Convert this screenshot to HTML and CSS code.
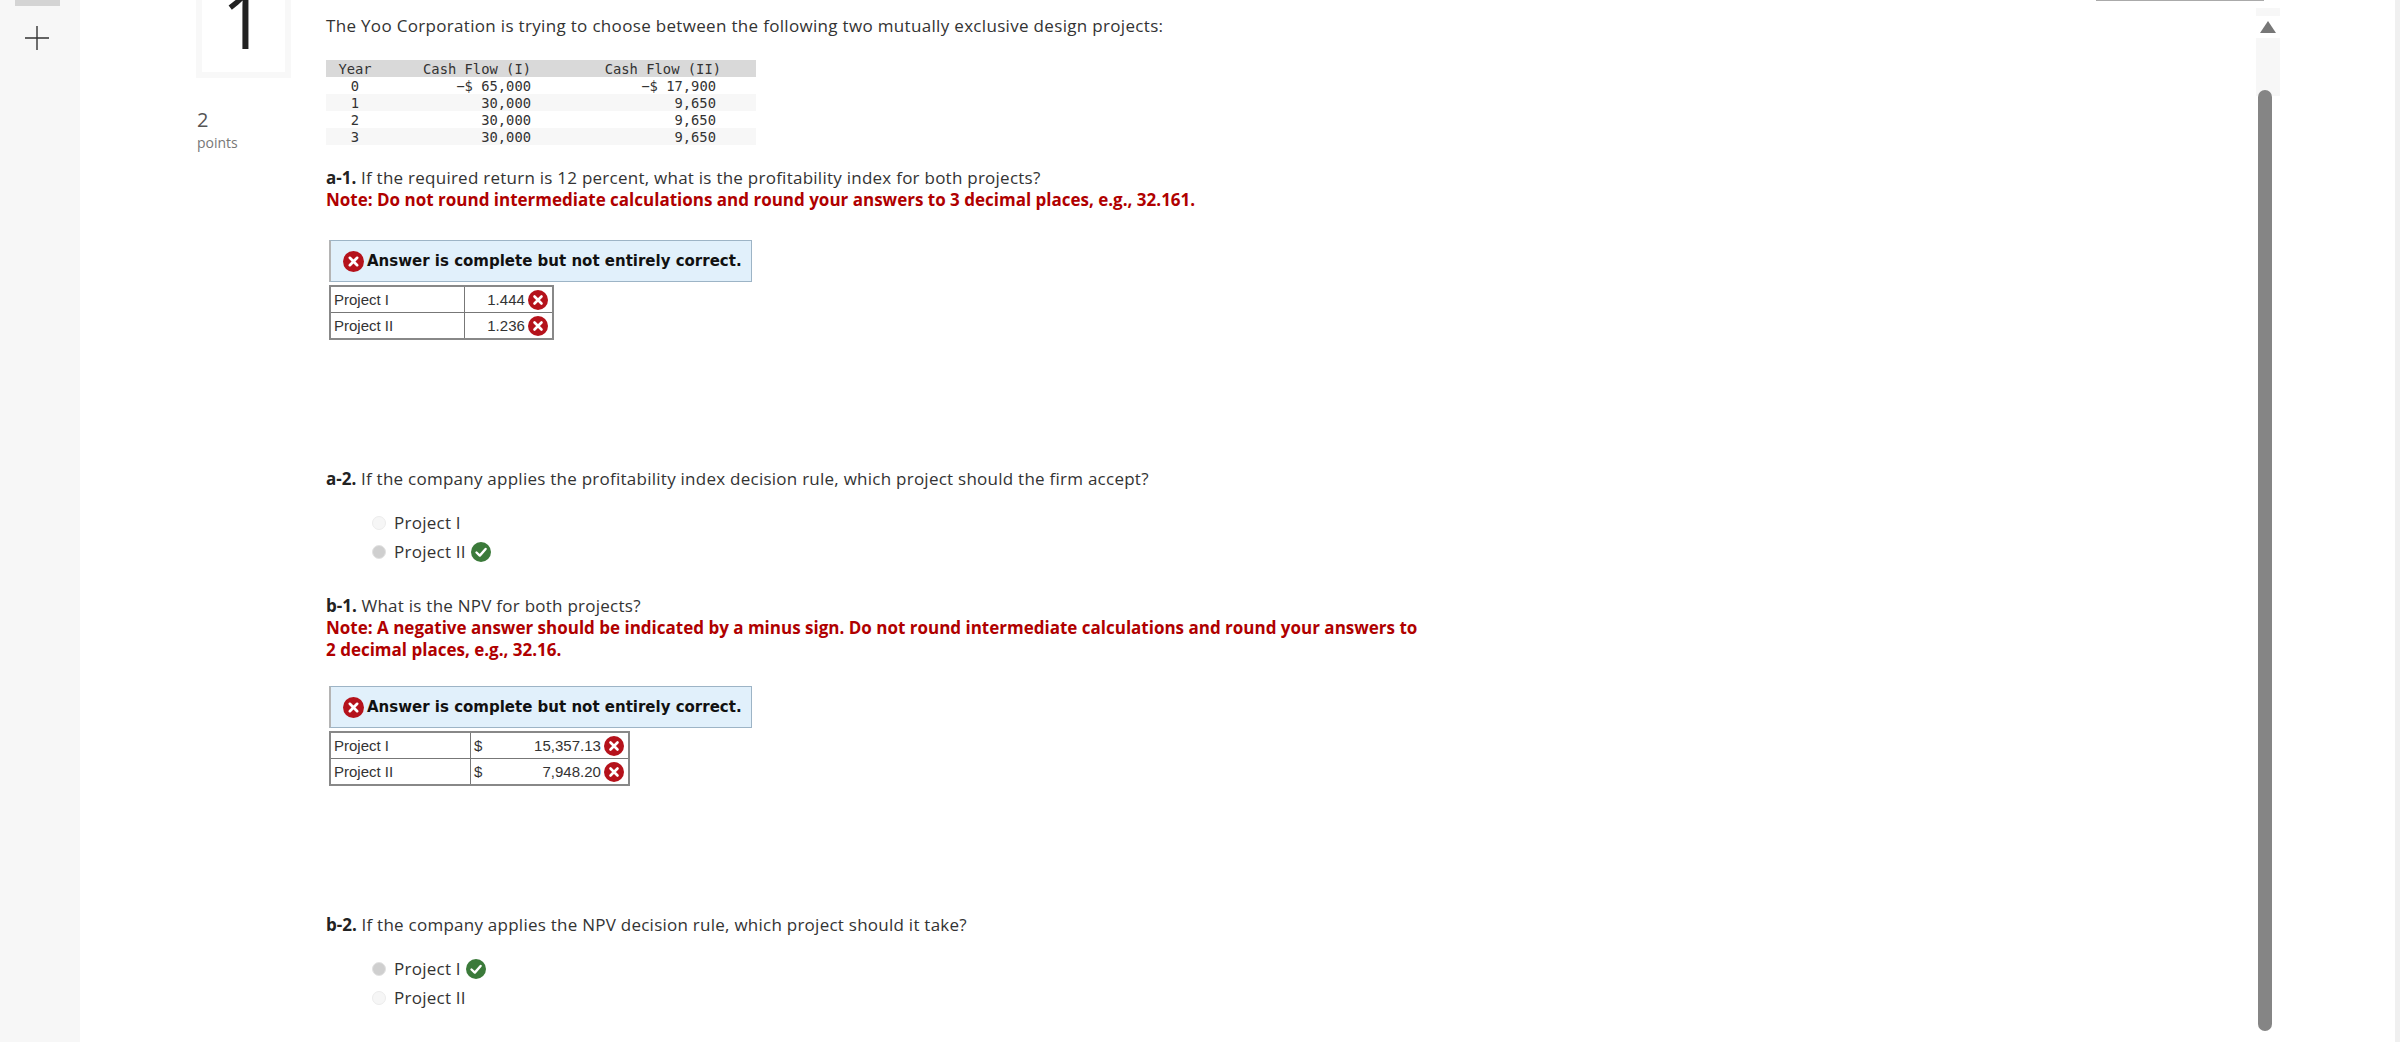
FILE: index.html
```html
<!DOCTYPE html>
<html lang="en">
<head>
    <meta charset="UTF-8">
    <title>Question 1</title>
    <link rel="stylesheet" href="styles.css">
</head>
<body>
    <div class="page">
        <div class="rail">
            <div class="rail-tab"></div>
            <svg class="rail-plus" width="24" height="24" viewBox="0 0 24 24"><path d="M12 0V24M0 12H24" stroke="#333" stroke-width="1.4" fill="none"/></svg>
        </div>
        <div class="gutter">
            <div class="number-card"><span>1</span></div>
            <div class="points-value">2</div>
            <div class="points-label">points</div>
        </div>
        <div class="content">
            <p class="intro">The Yoo Corporation is trying to choose between the following two mutually exclusive design projects:</p>

            <table class="cash-table">
                <tr><th class="year">Year</th><th class="flow1">Cash Flow (I)</th><th class="flow2">Cash Flow (II)</th></tr>
                <tr><td class="year">0</td><td class="flow1">−$ 65,000</td><td class="flow2">−$ 17,900</td></tr>
                <tr><td class="year">1</td><td class="flow1">30,000</td><td class="flow2">9,650</td></tr>
                <tr><td class="year">2</td><td class="flow1">30,000</td><td class="flow2">9,650</td></tr>
                <tr><td class="year">3</td><td class="flow1">30,000</td><td class="flow2">9,650</td></tr>
            </table>

            <p class="question q-a1"><strong>a-1.</strong> If the required return is 12 percent, what is the profitability index for both projects?<br>
                <span class="note">Note: Do not round intermediate calculations and round your answers to 3 decimal places, e.g., 32.161.</span></p>

            <div class="alert">
                <svg class="icon" viewBox="0 0 20 20"><circle cx="10" cy="10" r="10" fill="#b5121b"/><path d="M6.5 6.5L13.5 13.5M13.5 6.5L6.5 13.5" stroke="#fff" stroke-width="2.6" stroke-linecap="round"/></svg>
                <span>Answer is complete but not entirely correct.</span>
            </div>
            <table class="answers answers-pi">
                <tr><td class="name">Project I</td><td class="value">1.444 <svg class="icon" viewBox="0 0 20 20"><circle cx="10" cy="10" r="10" fill="#b5121b"/><path d="M6.5 6.5L13.5 13.5M13.5 6.5L6.5 13.5" stroke="#fff" stroke-width="2.6" stroke-linecap="round"/></svg></td></tr>
                <tr><td class="name">Project II</td><td class="value">1.236 <svg class="icon" viewBox="0 0 20 20"><circle cx="10" cy="10" r="10" fill="#b5121b"/><path d="M6.5 6.5L13.5 13.5M13.5 6.5L6.5 13.5" stroke="#fff" stroke-width="2.6" stroke-linecap="round"/></svg></td></tr>
            </table>

            <p class="question q-a2"><strong>a-2.</strong> If the company applies the profitability index decision rule, which project should the firm accept?</p>
            <div class="choices">
                <div class="choice"><span class="radio"></span>Project I</div>
                <div class="choice"><span class="radio checked"></span>Project II <svg class="icon" viewBox="0 0 20 20"><circle cx="10" cy="10" r="10" fill="#3b7a3a"/><path d="M5.5 10.5L8.8 13.6L14.6 7" stroke="#fff" stroke-width="2.4" fill="none" stroke-linecap="round" stroke-linejoin="round"/></svg></div>
            </div>

            <p class="question q-b1"><strong>b-1.</strong> What is the NPV for both projects?<br>
                <span class="note">Note: A negative answer should be indicated by a minus sign. Do not round intermediate calculations and round your answers to<br>2 decimal places, e.g., 32.16.</span></p>

            <div class="alert alert-npv">
                <svg class="icon" viewBox="0 0 20 20"><circle cx="10" cy="10" r="10" fill="#b5121b"/><path d="M6.5 6.5L13.5 13.5M13.5 6.5L6.5 13.5" stroke="#fff" stroke-width="2.6" stroke-linecap="round"/></svg>
                <span>Answer is complete but not entirely correct.</span>
            </div>
            <table class="answers answers-npv">
                <tr><td class="name">Project I</td><td class="dollar">$</td><td class="value">15,357.13 <svg class="icon" viewBox="0 0 20 20"><circle cx="10" cy="10" r="10" fill="#b5121b"/><path d="M6.5 6.5L13.5 13.5M13.5 6.5L6.5 13.5" stroke="#fff" stroke-width="2.6" stroke-linecap="round"/></svg></td></tr>
                <tr><td class="name">Project II</td><td class="dollar">$</td><td class="value">7,948.20 <svg class="icon" viewBox="0 0 20 20"><circle cx="10" cy="10" r="10" fill="#b5121b"/><path d="M6.5 6.5L13.5 13.5M13.5 6.5L6.5 13.5" stroke="#fff" stroke-width="2.6" stroke-linecap="round"/></svg></td></tr>
            </table>

            <p class="question q-b2"><strong>b-2.</strong> If the company applies the NPV decision rule, which project should it take?</p>
            <div class="choices">
                <div class="choice"><span class="radio checked"></span>Project I <svg class="icon" viewBox="0 0 20 20"><circle cx="10" cy="10" r="10" fill="#3b7a3a"/><path d="M5.5 10.5L8.8 13.6L14.6 7" stroke="#fff" stroke-width="2.4" fill="none" stroke-linecap="round" stroke-linejoin="round"/></svg></div>
                <div class="choice"><span class="radio"></span>Project II</div>
            </div>
        </div>
        <div class="scrollbar">
            <div class="scroll-head"><div class="scroll-button"><span class="scroll-arrow"></span></div></div>
            <div class="scroll-thumb"></div>
        </div>
        <div class="side"></div>
        <div class="top-line"></div>
    </div>
</body>
</html>
```

FILE: styles.css
```css
body { margin: 0; background: #fff; font-family: "Open Sans", sans-serif; color: #333; }
.page { display: flex; height: 1042px; overflow: hidden; position: relative; }

.rail { width: 80px; flex: none; background: #f7f7f7; }
.rail-tab { width: 45px; height: 6px; margin-left: 15px; background: #d4d4d4; }
.rail-plus { display: block; margin: 20px 0 0 25px; }

.gutter { width: 246px; flex: none; box-sizing: border-box; padding-left: 116px; }
.number-card {
    width: 95px;
    height: 78px;
    box-sizing: border-box;
    border: 6px solid #f8f8f8;
    border-top: none;
    overflow: hidden;
    text-align: center;
}
.number-card span {
    display: block;
    margin-top: -25px;
    font-size: 76px;
    line-height: 90px;
    color: #222;
}
.points-value { margin-top: 30px; padding-left: 1px; font-size: 20px; line-height: 24px; color: #555; }
.points-label { margin-top: 2px; padding-left: 1px; font-size: 14px; line-height: 18px; color: #777; }

.content { width: 1930px; flex: none; font-size: 17px; letter-spacing: 0.25px; }
.intro { margin: 14px 0 0; line-height: 24px; letter-spacing: 0.32px; }

.cash-table {
    border-collapse: collapse;
    margin-top: 22px;
    width: 430px;
    font-family: "DejaVu Sans Mono", monospace;
    font-size: 13.8px;
    letter-spacing: 0;
    color: #333;
    background: #fff;
}
.cash-table th { background: #d9d9d9; font-weight: normal; height: 17px; padding: 0; }
.cash-table td { height: 17px; padding: 0; }
.cash-table tr:nth-child(odd) td { background: #f7f7f7; }
.year { width: 58px; text-align: center; }
.flow1 { width: 147px; text-align: right; }
.flow2 { text-align: right; padding-right: 40px !important; }
.cash-table th.flow2 { padding-right: 35px !important; }

.question { margin: 0; line-height: 22px; }
.question strong { font-weight: 700; color: #222; letter-spacing: 0; }
.note { color: #b00000; font-weight: 700; letter-spacing: 0; }
.q-a1 { margin-top: 22px; }
.q-a2 { margin-top: 128px; }
.q-b1 { margin-top: 29px; }
.q-b2 { margin-top: 128px; }

.alert {
    display: flex;
    align-items: center;
    gap: 3px;
    width: 423px;
    height: 42px;
    box-sizing: border-box;
    margin: 29px 0 3px 3px;
    padding-left: 12px;
    background: #e1f0fb;
    border: 1px solid #9db4c6;
    border-left: 2px solid #b4b4b4;
    font-family: "DejaVu Sans", sans-serif;
    font-weight: 700;
    font-size: 15px;
    letter-spacing: 0;
    color: #111;
}
.alert-npv { margin-top: 25px; }
.alert .icon { width: 21px; height: 21px; }
.icon { width: 20px; height: 20px; vertical-align: middle; flex: none; }

.answers {
    border-collapse: collapse;
    margin-left: 3px;
    font-family: "Liberation Sans", sans-serif;
    font-size: 15px;
    letter-spacing: 0;
    color: #333;
    border: 2px solid #888;
}
.answers td { border: 1px solid #777; height: 25px; padding: 0 3px; }
.answers .value { text-align: right; padding-right: 4px; }
.answers .icon { margin-left: -1px; vertical-align: -5px; }
.answers-pi .name { width: 127px; }
.answers-pi .value { width: 80px; }
.answers-npv .name { width: 133px; }
.answers-npv .dollar { width: 30px; border-right: none; padding-right: 0; }
.answers-npv .value { width: 120px; border-left: none; padding-left: 0; }

.choices { margin: 18px 0 0 46px; }
.choice { display: flex; align-items: center; gap: 5px; height: 29px; }
.radio {
    width: 12px;
    height: 12px;
    margin-right: 3px;
    border-radius: 50%;
    background: #f6f6f6;
    border: 1px solid #ececec;
}
.radio.checked { background: #cfcfcf; border-color: #e2e2e2; }

.scrollbar { width: 24px; flex: none; position: relative; }
.scroll-head { height: 88px; margin-top: 8px; background: #f7f7f7; padding-top: 8px; box-sizing: border-box; }
.scroll-button { height: 22px; background: #fff; display: flex; justify-content: center; align-items: center; }
.scroll-arrow { width: 0; height: 0; border-left: 8px solid transparent; border-right: 8px solid transparent; border-bottom: 12px solid #777; }
.scroll-thumb { position: absolute; top: 90px; left: 2px; width: 14px; height: 941px; border-radius: 7px; background: #858585; }

.side { flex: 1; border-right: 5px solid #f0f0f0; }
.top-line { position: absolute; top: 0; left: 2096px; width: 168px; height: 1px; background: #aaa; }
```
